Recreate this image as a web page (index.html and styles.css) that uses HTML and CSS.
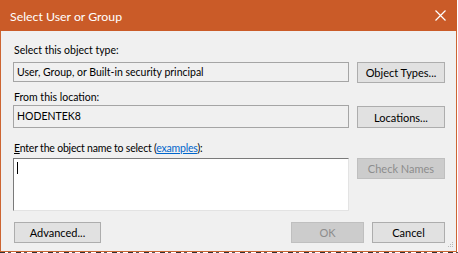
FILE: index.html
```html
<!DOCTYPE html>
<html lang="en">
<head>
    <meta charset="UTF-8">
    <title>Select User or Group</title>
    <link rel="stylesheet" href="styles.css">
</head>
<body>
    <div class="dialogo">
        <div class="barra-titulo">
            <span class="titulo">Select User or Group</span>
            <svg class="cerrar" width="11" height="11" viewBox="0 0 11 11">
                <path d="M0.5 0.5 L10.5 10.5 M10.5 0.5 L0.5 10.5" stroke="#ffffff" stroke-width="1.2" fill="none"/>
            </svg>
        </div>

        <div class="contenido">
            <div class="etiqueta etiqueta-tipo">Select this object type:</div>
            <div class="fila">
                <div class="campo">User, Group, or Built-in security principal</div>
                <button class="boton">Object Types...</button>
            </div>

            <div class="etiqueta etiqueta-lugar">From this location:</div>
            <div class="fila">
                <div class="campo campo-alto">HODENTEK8</div>
                <button class="boton boton-alto">Locations...</button>
            </div>

            <div class="etiqueta etiqueta-nombre"><u>E</u>nter the object name to select (<a href="#">examples</a>):</div>
            <div class="fila">
                <div class="nombres"><span class="cursor"></span></div>
                <button class="boton" disabled>Check Names</button>
            </div>

            <div class="pie">
                <button class="boton boton-avanzado">Advanced...</button>
                <div class="derecha">
                    <button class="boton boton-corto" disabled>OK</button>
                    <button class="boton boton-corto">Cancel</button>
                </div>
            </div>
        </div>

        <svg class="agarre" width="7" height="7" viewBox="0 0 7 7">
            <rect x="5" y="0" width="1" height="1" fill="#b8b8b8"/>
            <rect x="3" y="2" width="1" height="1" fill="#b8b8b8"/>
            <rect x="5" y="2" width="1" height="1" fill="#b8b8b8"/>
            <rect x="1" y="4" width="1" height="1" fill="#b8b8b8"/>
            <rect x="3" y="4" width="1" height="1" fill="#b8b8b8"/>
            <rect x="5" y="4" width="1" height="1" fill="#b8b8b8"/>
        </svg>
    </div>
    <div class="fondo"></div>
</body>
</html>
```

FILE: styles.css
```css
* {
    box-sizing: border-box;
}
body {
    margin: 0;
    width: 458px;
    height: 253px;
    overflow: hidden;
    background-color: #ffffff;
    font-family: Lato, "Liberation Sans", Arial, sans-serif;
    font-size: 10.5px;
    color: #000000;
}
.dialogo {
    position: relative;
    width: 457px;
    height: 252px;
    display: flex;
    flex-direction: column;
    background-color: #f0f0f0;
    border: 1px solid #cd6532;
    border-top: none;
}
.barra-titulo {
    height: 31px;
    flex-shrink: 0;
    display: flex;
    align-items: center;
    justify-content: space-between;
    margin: 0 -1px;
    padding: 0 10px 0 10px;
    background-color: #ca5b28;
    color: #ffffff;
}
.titulo {
    font-size: 12.3px;
    padding-top: 1px;
}
.cerrar {
    margin-right: 1px;
}
.contenido {
    flex: 1;
    display: flex;
    flex-direction: column;
    padding: 0 11px 0 12px;
}
.etiqueta {
    height: 13px;
    line-height: 13px;
    padding-left: 1px;
}
.etiqueta-tipo {
    margin: 13px 0 5px;
}
.etiqueta-lugar {
    margin: 8px 0 1px;
}
.etiqueta-nombre {
    margin: 14px 0 3px;
    letter-spacing: -0.2px;
}
.etiqueta a {
    color: #0066cc;
}
.fila {
    display: flex;
    gap: 8px;
    align-items: flex-start;
}
.campo {
    width: 336px;
    height: 20px;
    line-height: 18px;
    padding-left: 3px;
    border: 1px solid #a5a5a5;
    background-color: #f0f0f0;
}
.campo-alto {
    height: 23px;
    line-height: 21px;
}
.boton {
    width: 88px;
    height: 21px;
    padding: 0;
    font-family: inherit;
    font-size: 11px;
    color: #000000;
    background-color: #e1e1e1;
    border: 1px solid #adadad;
}
.boton-alto {
    height: 22px;
    margin-top: 1px;
}
.boton:disabled {
    color: #8d8d8d;
    background-color: #cccccc;
    border-color: #bfbfbf;
}
.nombres {
    width: 336px;
    height: 53px;
    padding: 3px 0 0 3px;
    background-color: #ffffff;
    border: 1px solid #e3e3e3;
    border-top-color: #7a7a7a;
    border-left-color: #7a7a7a;
}
.cursor {
    display: block;
    width: 1px;
    height: 12px;
    background-color: #000000;
}
.pie {
    display: flex;
    justify-content: space-between;
    margin-top: 11px;
}
.boton-avanzado {
    width: 87px;
    margin-left: 1px;
}
.derecha {
    display: flex;
    gap: 8px;
}
.boton-corto {
    width: 73px;
}
.agarre {
    position: absolute;
    right: 2px;
    bottom: 2px;
}
.fondo {
    height: 1px;
    background: repeating-linear-gradient(90deg, #333333 0 5px, #ffffff 5px 8px, #555555 8px 11px, #ffffff 11px 16px);
}
```
